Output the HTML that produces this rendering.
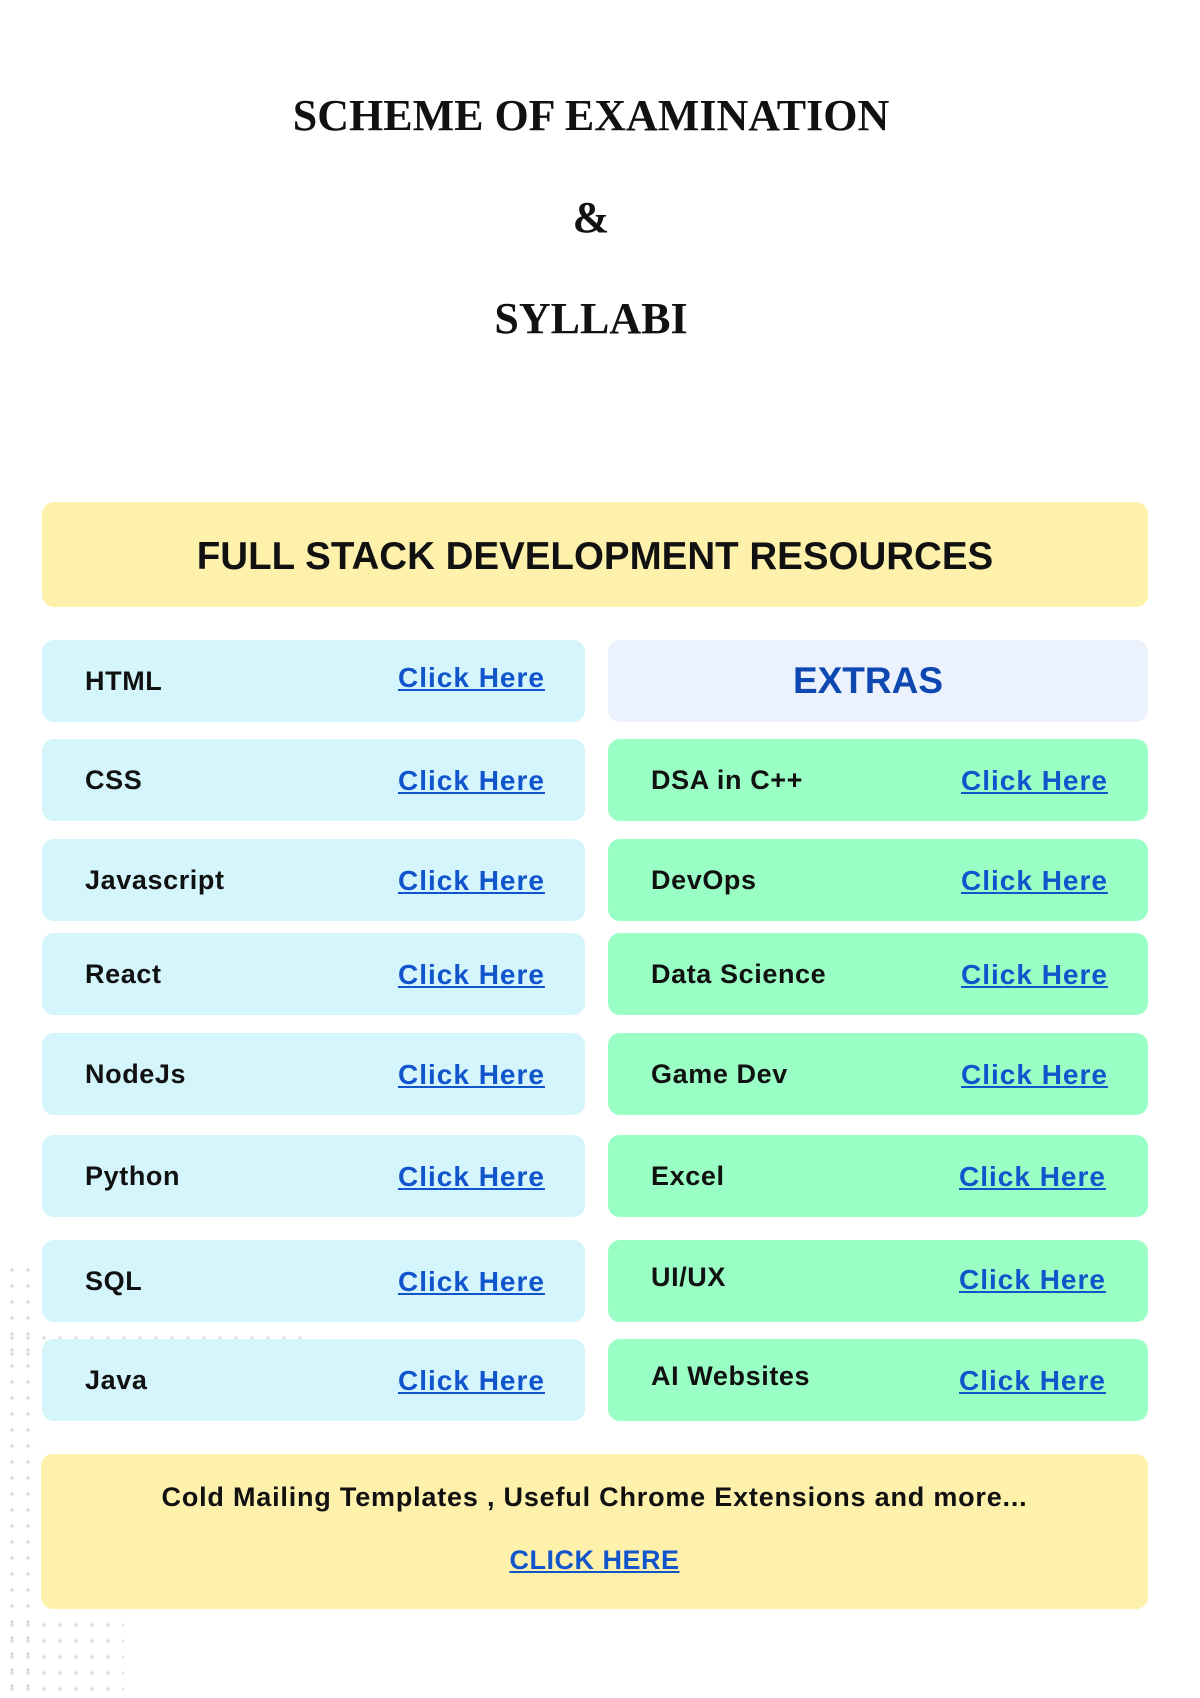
<!DOCTYPE html>
<html><head><meta charset="utf-8"><style>
*{margin:0;padding:0;box-sizing:border-box}
body{width:1200px;height:1698px;background:#fff;position:relative;overflow:hidden;font-family:"Liberation Sans",sans-serif}
.t{position:absolute;left:0;width:1182px;text-align:center;font-family:"Liberation Serif",serif;font-weight:bold;font-size:44px;color:#111;line-height:1}
.box{position:absolute;border-radius:12px}
.lb{background:#d4f5fc;left:42px;width:543px;height:82px}
.gr{background:#99ffc4;left:608px;width:540px;height:82px}
.lab{position:absolute;left:43px;top:26px;font-weight:bold;font-size:27px;color:#111;letter-spacing:0.6px}
.lnk{position:absolute;left:356px;top:26px;font-weight:bold;font-size:28px;color:#1155cc;text-decoration:underline;letter-spacing:1px}
.dots{position:absolute;background-image:radial-gradient(circle,#ddd 1.5px,transparent 2px);background-size:16px 16px}
</style></head><body>
<div class="dots" style="left:4px;top:1262px;width:30px;height:436px"></div>
<div class="dots" style="left:4px;top:1330px;width:300px;height:34px"></div>
<div class="dots" style="left:4px;top:1617px;width:120px;height:81px"></div>
<div class="t" style="top:94px">SCHEME OF EXAMINATION</div>
<div class="t" style="top:196px">&amp;</div>
<div class="t" style="top:297px">SYLLABI</div>
<div class="box" style="background:#fef1ac;left:42px;top:502px;width:1106px;height:105px"></div>
<div style="position:absolute;left:42px;width:1106px;top:535px;text-align:center;font-weight:bold;font-size:38.5px;color:#111">FULL STACK DEVELOPMENT RESOURCES</div>

<div class="box lb" style="top:640px"><span class="lab">HTML</span><span class="lnk" style="top:22px">Click Here</span></div>
<div class="box" style="background:#ebf2fd;left:608px;width:540px;height:82px;top:640px;text-align:center;font-weight:bold;font-size:37px;color:#0d47b1;line-height:82px;padding-right:20px">EXTRAS</div>
<div class="box lb" style="top:739px"><span class="lab">CSS</span><span class="lnk">Click Here</span></div>
<div class="box gr" style="top:739px"><span class="lab">DSA in C++</span><span class="lnk" style="left:353px">Click Here</span></div>
<div class="box lb" style="top:839px"><span class="lab">Javascript</span><span class="lnk">Click Here</span></div>
<div class="box gr" style="top:839px"><span class="lab">DevOps</span><span class="lnk" style="left:353px">Click Here</span></div>
<div class="box lb" style="top:933px"><span class="lab">React</span><span class="lnk">Click Here</span></div>
<div class="box gr" style="top:933px"><span class="lab">Data Science</span><span class="lnk" style="left:353px">Click Here</span></div>
<div class="box lb" style="top:1033px"><span class="lab">NodeJs</span><span class="lnk">Click Here</span></div>
<div class="box gr" style="top:1033px"><span class="lab">Game Dev</span><span class="lnk" style="left:353px">Click Here</span></div>
<div class="box lb" style="top:1135px"><span class="lab">Python</span><span class="lnk">Click Here</span></div>
<div class="box gr" style="top:1135px"><span class="lab">Excel</span><span class="lnk" style="left:351px">Click Here</span></div>
<div class="box lb" style="top:1240px"><span class="lab">SQL</span><span class="lnk">Click Here</span></div>
<div class="box gr" style="top:1240px"><span class="lab" style="top:22px">UI/UX</span><span class="lnk" style="left:351px;top:24px">Click Here</span></div>
<div class="box lb" style="top:1339px"><span class="lab">Java</span><span class="lnk">Click Here</span></div>
<div class="box gr" style="top:1339px"><span class="lab" style="top:22px">AI Websites</span><span class="lnk" style="left:351px">Click Here</span></div>

<div class="box" style="background:#fef1ac;left:41px;top:1454px;width:1107px;height:155px"></div>
<div style="position:absolute;left:41px;width:1107px;top:1482px;text-align:center;font-weight:bold;font-size:27px;color:#111;letter-spacing:0.8px">Cold Mailing Templates , Useful Chrome Extensions and more...</div>
<div style="position:absolute;left:41px;width:1107px;top:1545px;text-align:center;font-weight:bold;font-size:27px;color:#1155cc;text-decoration:underline;letter-spacing:0.5px">CLICK HERE</div>
</body></html>
